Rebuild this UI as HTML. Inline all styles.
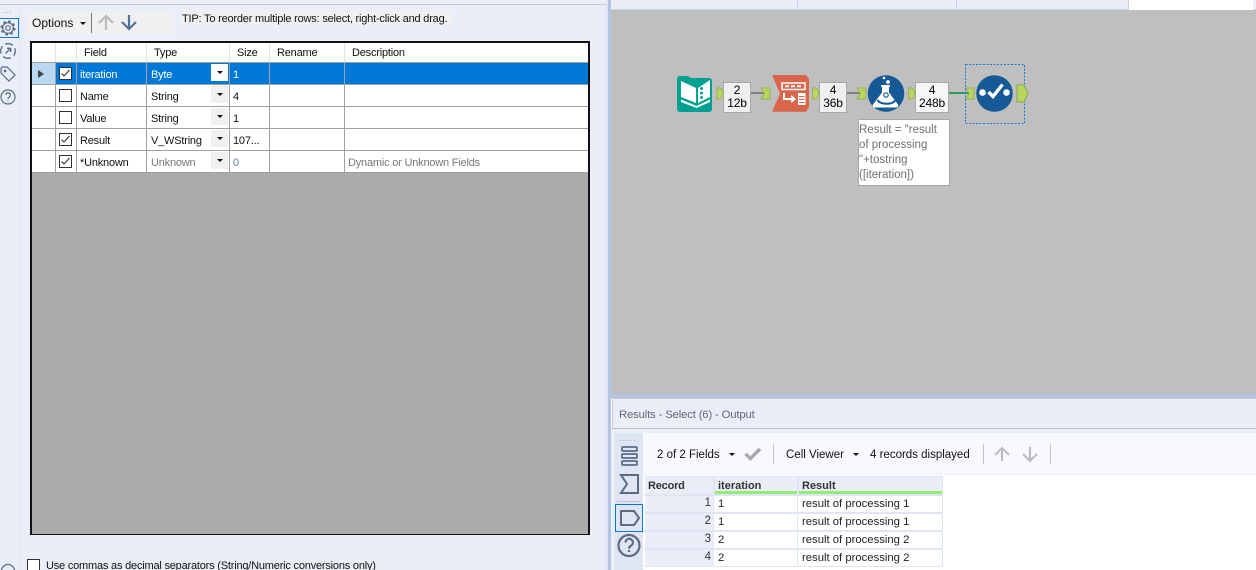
<!DOCTYPE html>
<html><head><meta charset="utf-8">
<style>
html,body{margin:0;padding:0;width:1256px;height:570px;overflow:hidden;background:#e9eef8}
body{position:relative;font-family:"Liberation Sans",sans-serif;font-size:11px;color:#111}
.a{position:absolute}
.t{position:absolute;white-space:nowrap;line-height:14px}
.g{letter-spacing:-.2px}
.cb{position:absolute;left:59px;width:11px;height:11px;border:1px solid #333;background:#fff}
.dd{position:absolute;left:211px;width:17px;height:17px;background:#f0f0f0}
.dd:after{content:"";position:absolute;left:6px;top:7px;border-left:3px solid transparent;border-right:3px solid transparent;border-top:3px solid #111}
.hl{position:absolute;left:32px;width:556px;height:1px;background:#a0a0a0}
.vl{position:absolute;top:63px;width:1px;height:109px;background:#a0a0a0}
.hv{position:absolute;top:43px;width:1px;height:19px;background:#e4e4e4}
.box{position:absolute;background:#f0f0f0;border:1px solid #a8a8a8;box-sizing:border-box;text-align:center;line-height:13px;font-size:12px;color:#000;padding-top:1px;letter-spacing:-.2px}
.rc{position:absolute;background:#e9eef8}
.num{text-align:right;line-height:15px;padding-right:2px;box-sizing:border-box;font-size:11.500px;color:#333}
.wc{position:absolute;background:#fff;font-size:11.300px;line-height:17px;padding-left:4px;box-sizing:border-box;white-space:nowrap;color:#222}
.sb{font-size:11.500px}
.th{font-weight:700;font-size:11px;color:#333;top:479px}
</style></head><body>

<!-- left panel -->
<div class="a" style="left:0;top:4px;width:606px;height:1px;background:#c8c8c8"></div>
<div class="a" style="left:606px;top:0;width:2px;height:570px;background:#dfe5f2"></div>
<div class="a" style="left:608px;top:0;width:3px;height:570px;background:#b3c3e3"></div>
<div class="a" style="left:19px;top:9px;width:1px;height:561px;background:#e2e8f3"></div>
<div class="t" style="left:2px;top:3px;color:#999;font-size:9px;letter-spacing:1px">...</div>

<!-- side icons -->
<div class="a" style="left:0;top:18px;width:19px;height:20px;border:1px solid #0078d7;border-left:none;box-sizing:border-box"></div>
<svg class="a" style="left:0;top:18px" width="20" height="90" viewBox="0 0 20 90" fill="none" stroke="#5b6b85" stroke-width="1.200">
<circle cx="8" cy="10" r="2.300"/>
<circle cx="8" cy="10" r="5.300"/>
<circle cx="8" cy="10" r="6.500" stroke-width="2" stroke-dasharray="2.600 2.500"/>
<circle cx="8" cy="33" r="7.300" stroke-dasharray="8 3.470" stroke-dashoffset="3" stroke-width="1.300"/>
<path d="M5.500 35.500l5-5M7 30.300h3.700V34" stroke-width="1.300"/>
<path d="M1 50.500V55l8 8 6-6-8-8H2z"/><circle cx="5" cy="53" r=".8"/>
<circle cx="8" cy="79" r="7"/><path d="M5.800 77a2.300 2.300 0 1 1 3.500 2c-1 .6-1.300 1-1.300 2"/><path d="M8 82.500v1"/>
</svg>
<svg class="a" style="left:0;top:563px" width="18" height="7" fill="none" stroke="#5b6b85" stroke-width="1.300"><circle cx="8" cy="8" r="6.500"/></svg>

<!-- toolbar -->
<div class="a" style="left:27px;top:12px;width:147px;height:23px;background:#f0f0f0"></div>
<div class="t" style="left:32px;top:16px;font-size:12px">Options</div>
<div class="a" style="left:80px;top:22px;border-left:3px solid transparent;border-right:3px solid transparent;border-top:3px solid #111"></div>
<div class="a" style="left:91px;top:13px;width:1px;height:20px;background:#777"></div>
<svg class="a" style="left:96px;top:13px" width="42" height="19" fill="none" stroke-width="2.200"><path d="M10 17V3M3 10l7-7 7 7" stroke="#bcbcbc"/><path d="M33 2v14M26 9l7 7 7-7" stroke="#54729a"/></svg>
<div class="a" style="left:180px;top:11px;width:272px;height:13px;background:#f0f0f0"></div>
<div class="t g" style="left:182px;top:12px">TIP: To reorder multiple rows: select, right-click and drag.</div>

<!-- grid -->
<div class="a" style="left:30px;top:41px;width:560px;height:494px;box-sizing:border-box;border:2px solid #111;border-width:2px 2px 1px 2px;background:#ababab"></div>
<div class="a" style="left:32px;top:43px;width:556px;height:129px;background:#fff"></div>
<div class="a" style="left:55px;top:63px;width:533px;height:21px;background:#0078d7"></div>
<div class="a" style="left:32px;top:63px;width:23px;height:21px;background:#b9d9f2"></div>
<div class="a" style="left:38px;top:70px;border-top:4.500px solid transparent;border-bottom:4.500px solid transparent;border-left:6px solid #444"></div>
<div class="hl" style="top:62px"></div><div class="hl" style="top:84px"></div><div class="hl" style="top:106px"></div><div class="hl" style="top:128px"></div><div class="hl" style="top:150px"></div><div class="hl" style="top:172px"></div>
<div class="vl" style="left:55px"></div><div class="vl" style="left:76px"></div><div class="vl" style="left:146px"></div><div class="vl" style="left:229px"></div><div class="vl" style="left:269px"></div><div class="vl" style="left:344px"></div>
<div class="hv" style="left:55px"></div><div class="hv" style="left:76px"></div><div class="hv" style="left:146px"></div><div class="hv" style="left:229px"></div><div class="hv" style="left:269px"></div><div class="hv" style="left:344px"></div>

<div class="t g" style="left:84px;top:46px">Field</div><div class="t g" style="left:154px;top:46px">Type</div><div class="t g" style="left:237px;top:46px">Size</div><div class="t g" style="left:277px;top:46px">Rename</div><div class="t g" style="left:352px;top:46px">Description</div>

<div class="cb" style="top:67px"></div><div class="cb" style="top:89px"></div><div class="cb" style="top:111px"></div><div class="cb" style="top:133px"></div><div class="cb" style="top:155px"></div>
<svg class="a" style="left:59px;top:67px" width="13" height="100" fill="none" stroke="#333" stroke-width="1.100"><path d="M2.500 6.500l2.500 2.500 5.500-6M2.500 72.500l2.500 2.500 5.500-6M2.500 94.500l2.500 2.500 5.500-6"/></svg>

<div class="t g" style="left:80px;top:68px;color:#fff">iteration</div><div class="t g" style="left:151px;top:68px;color:#fff">Byte</div><div class="t g" style="left:233px;top:68px;color:#fff">1</div>
<div class="t g" style="left:80px;top:90px">Name</div><div class="t g" style="left:151px;top:90px">String</div><div class="t g" style="left:233px;top:90px">4</div>
<div class="t g" style="left:80px;top:112px">Value</div><div class="t g" style="left:151px;top:112px">String</div><div class="t g" style="left:233px;top:112px">1</div>
<div class="t g" style="left:80px;top:134px">Result</div><div class="t g" style="left:151px;top:134px">V_WString</div><div class="t g" style="left:233px;top:134px">107...</div>
<div class="t g" style="left:80px;top:156px">*Unknown</div><div class="t g" style="left:151px;top:156px;color:#777">Unknown</div><div class="t g" style="left:233px;top:156px;color:#5a7fb0">0</div><div class="t g" style="left:348px;top:156px;color:#777">Dynamic or Unknown Fields</div>
<div class="dd" style="top:64px;background:#fff"></div><div class="dd" style="top:86px"></div><div class="dd" style="top:108px"></div><div class="dd" style="top:130px"></div><div class="dd" style="top:152px"></div>

<!-- bottom checkbox -->
<div class="a" style="left:27px;top:559px;width:11px;height:11px;border:1px solid #333;background:#fff"></div>
<div class="t g" style="left:46px;top:559px">Use commas as decimal separators (String/Numeric conversions only)</div>

<!-- right top tabs -->
<div class="a" style="left:611px;top:0;width:645px;height:10px;background:#e9eef8"></div>
<div class="a" style="left:611px;top:9px;width:645px;height:1px;background:#c6d2e8"></div>
<div class="a" style="left:797px;top:0;width:1px;height:10px;background:#c6d2e8"></div>
<div class="a" style="left:956px;top:0;width:1px;height:10px;background:#c6d2e8"></div>
<div class="a" style="left:1128px;top:0;width:1px;height:10px;background:#c6d2e8"></div>
<div class="a" style="left:1129px;top:0;width:124px;height:10px;background:#fff"></div>

<!-- canvas -->
<div class="a" style="left:611px;top:10px;width:645px;height:384px;background:#bfbfbf"></div>
<div class="a" style="left:611px;top:394px;width:645px;height:4px;background:#b3c3e3"></div>

<svg class="a" style="left:660px;top:50px" width="380" height="90" viewBox="0 0 380 90">
<!-- connectors -->
<rect x="70" y="42" width="34" height="2" fill="#808080"/><rect x="170" y="42" width="30" height="2" fill="#808080"/>
<rect x="270" y="42" width="40" height="2" fill="#2f9d55"/>
<!-- book tool -->
<path d="M17 29a3 3 0 0 1 3-3h8l3 2h18a3 3 0 0 1 3 3v28a3 3 0 0 1-3 3H20a3 3 0 0 1-3-3z" fill="#00a193"/>
<path d="M21 31l15 7v15l-15-6zM38 38l12-8v17l-12 6z" fill="#fff"/>
<path d="M21 49.500l15.500 6.500L50 49.500v2.500l-13.500 6L21 52z" fill="#fff"/>
<circle cx="41.500" cy="38.500" r="1.500" fill="#00a193"/><circle cx="41.500" cy="43" r="1.500" fill="#00a193"/><circle cx="41.500" cy="47.500" r="1.500" fill="#00a193"/>
<!-- anchors -->
<path d="M57 38h3l3 2.500v6l-3 2.500h-3z" fill="#b8d65e" stroke="#8ca64a" stroke-width=".7"/>
<path d="M101 38h9v11h-9l3-5.500z" fill="#b8d65e" stroke="#8ca64a" stroke-width=".7"/>
<!-- red tool -->
<path d="M112 25h34l3 4v28l-3 4.700h-34l8-18.200z" fill="#d9664a"/>
<rect x="122" y="33" width="23" height="6.500" fill="none" stroke="#fff" stroke-width="1.500"/><path d="M125 36.300h4M131 36.300h4M137 36.300h4" stroke="#fff" stroke-width="2"/>
<path d="M124 43v6h9M131 46l3.500 3-3.500 3" fill="none" stroke="#fff" stroke-width="2"/>
<rect x="138" y="43" width="7.500" height="12" fill="#fff"/><path d="M139 46.500h5.500M139 49.500h5.500M139 52.500h5.500" stroke="#d9664a"/>
<path d="M152.700 38h3l3 2.500v6l-3 2.500h-3z" fill="#b8d65e" stroke="#8ca64a" stroke-width=".7"/>
<path d="M197 38h9v11h-9l3-5.500z" fill="#b8d65e" stroke="#8ca64a" stroke-width=".7"/>
<!-- formula -->
<circle cx="226" cy="43.500" r="18.300" fill="#155a96"/>
<path d="M221 35h9v1.500l-1 .5v5.500l9 12a2 2 0 0 1-2 3h-21a2 2 0 0 1-2-3l9-12V37l-1-.5z" fill="#fff"/>
<path d="M217.500 50c3 5 15 5 18 0" fill="none" stroke="#155a96" stroke-width="2"/>
<circle cx="226" cy="45" r="2.200" fill="none" stroke="#155a96" stroke-width="1.200"/>
<circle cx="228" cy="32" r="1.900" fill="#fff"/><circle cx="224" cy="28" r="1.300" fill="#fff"/>
<path d="M248.700 38h3l3 2.500v6l-3 2.500h-3z" fill="#b8d65e" stroke="#8ca64a" stroke-width=".7"/>
<path d="M306 38h8v11h-8l3-5.500z" fill="#b8d65e" stroke="#8ca64a" stroke-width=".7"/>
<!-- select -->
<rect x="305.500" y="14.500" width="59" height="59" fill="none" stroke="#1a78d0" stroke-dasharray="2 1.500"/>
<circle cx="334.500" cy="43.500" r="18.300" fill="#155a96"/>
<circle cx="322.500" cy="42.500" r="3.300" fill="#fff"/><circle cx="346.500" cy="42.500" r="3.300" fill="#fff"/>
<path d="M328.500 42l4.500 4.500 9.500-12" fill="none" stroke="#fff" stroke-width="3.400"/>
<path d="M357 35h7l4 8.500-4 8.500h-7z" fill="#b8d65e" stroke="#7d9a45" stroke-width=".8"/>
</svg>
<div class="box" style="left:723px;top:82px;width:28px;height:31px">2<br>12b</div>
<div class="box" style="left:819px;top:82px;width:28px;height:31px">4<br>36b</div>
<div class="box" style="left:915px;top:82px;width:34px;height:31px;background:#f6f6f6">4<br>248b</div>
<div class="a" style="left:858px;top:119px;width:92px;height:67px;box-sizing:border-box;background:#fff;border:1px solid #a8a8a8;font-size:11.500px;line-height:15px;color:#6f6f6f;padding:3px 0 0 0;white-space:nowrap">Result = "result<br>of processing<br>"+tostring<br>([iteration])</div>

<!-- results panel -->
<div class="a" style="left:611px;top:398px;width:645px;height:172px;background:#fff"></div>
<div class="a" style="left:612px;top:398px;width:644px;height:31px;background:#e9eef8;border-top:1px solid #c9c9c9;border-bottom:1px solid #c0c0c0;border-left:1px solid #c9c9c9;box-sizing:border-box"></div>
<div class="t" style="left:619px;top:408px;font-size:11.300px;letter-spacing:-.15px;color:#667">Results - Select (6) - Output</div>
<div class="a" style="left:611px;top:429px;width:645px;height:4px;background:#e9eef8"></div>
<div class="a" style="left:615px;top:433px;width:28px;height:137px;background:#dfe5f2"></div>
<div class="a" style="left:643px;top:433px;width:613px;height:41px;background:#f7f9ff"></div>
<div class="a" style="left:611px;top:433px;width:4px;height:137px;background:#e9eef8"></div>
<div class="a" style="left:643px;top:474px;width:613px;height:1px;background:#eef1f7"></div>
<div class="t" style="left:619px;top:431px;color:#aaa;font-size:9px;letter-spacing:.3px">......</div>
<svg class="a" style="left:615px;top:445px" width="28" height="115" fill="none" stroke="#5b6b85">
<g stroke-width="1.800"><rect x="7" y="2" width="15" height="4" rx="1"/><rect x="7" y="9" width="15" height="4" rx="1"/><rect x="7" y="16" width="15" height="4" rx="1"/></g>
<path d="M6 30h17v18H6l6-9z" stroke-width="2"/>
<path d="M6 66h13l5 7-5 7H6z" stroke-width="2" stroke-linejoin="round"/>
<circle cx="14" cy="100.500" r="10.500" stroke-width="2.200"/><path d="M10.500 97.500a3.700 3.700 0 1 1 5.500 3.200c-1.400.8-2 1.500-2 3" stroke-width="2.200"/><path d="M14 105v2" stroke-width="2.200"/>
</svg>
<div class="a" style="left:617px;top:501px;width:24px;height:1px;background:#c4c4c4"></div>
<div class="a" style="left:615px;top:504px;width:28px;height:28px;box-sizing:border-box;border:1px solid #0078d7"></div>

<div class="t sb" style="left:657px;top:448px">2 of 2 Fields</div>
<div class="a" style="left:729px;top:453px;border-left:3px solid transparent;border-right:3px solid transparent;border-top:3px solid #111"></div>
<svg class="a" style="left:744px;top:447px" width="18" height="14" fill="none" stroke="#aaa" stroke-width="3.500"><path d="M1.500 7l5 4.500L16 2"/></svg>
<div class="a" style="left:773px;top:444px;width:1px;height:20px;background:#c4c4c4"></div>
<div class="t sb" style="left:786px;top:448px">Cell Viewer</div>
<div class="a" style="left:853px;top:453px;border-left:3px solid transparent;border-right:3px solid transparent;border-top:3px solid #111"></div>
<div class="t sb" style="left:870px;top:448px">4 records displayed</div>
<div class="a" style="left:983px;top:444px;width:1px;height:20px;background:#c4c4c4"></div>
<div class="a" style="left:1050px;top:444px;width:1px;height:20px;background:#c4c4c4"></div>
<svg class="a" style="left:994px;top:446px" width="46" height="16" fill="none" stroke="#bbb" stroke-width="2"><path d="M8 15V2M1 9l7-7 7 7M36 1v13M29 8l7 7 7-7"/></svg>

<!-- results table -->
<div class="rc" style="left:645px;top:477px;width:68px;height:17px"></div>
<div class="rc" style="left:715px;top:477px;width:82px;height:14px"></div>
<div class="rc" style="left:799px;top:477px;width:143px;height:14px"></div>
<div class="a" style="left:715px;top:491px;width:82px;height:3px;background:#90ee70"></div>
<div class="a" style="left:799px;top:491px;width:143px;height:3px;background:#90ee70"></div>
<div class="t th" style="left:648px;letter-spacing:-.2px">Record</div>
<div class="t th" style="left:718px">iteration</div>
<div class="t th" style="left:802px">Result</div>
<div class="a" style="left:644px;top:476px;width:299px;height:1px;background:#dfe5f2"></div>
<div class="a" style="left:644px;top:494px;width:299px;height:2px;background:#dfe5f2"></div>
<div class="a" style="left:644px;top:512px;width:299px;height:2px;background:#dfe5f2"></div>
<div class="a" style="left:644px;top:530px;width:299px;height:2px;background:#dfe5f2"></div>
<div class="a" style="left:644px;top:548px;width:299px;height:2px;background:#dfe5f2"></div>
<div class="a" style="left:644px;top:566px;width:299px;height:1px;background:#dfe5f2"></div>
<div class="a" style="left:713px;top:476px;width:2px;height:91px;background:#dfe5f2"></div>
<div class="a" style="left:797px;top:476px;width:2px;height:91px;background:#dfe5f2"></div>
<div class="a" style="left:942px;top:476px;width:1px;height:91px;background:#dfe5f2"></div>
<div class="rc num" style="left:645px;top:496px;width:68px;height:16px">1</div>
<div class="rc num" style="left:645px;top:514px;width:68px;height:16px">2</div>
<div class="rc num" style="left:645px;top:532px;width:68px;height:16px">3</div>
<div class="rc num" style="left:645px;top:550px;width:68px;height:16px">4</div>
<div class="wc" style="left:714px;top:496px;width:83px;height:16px">1</div>
<div class="wc" style="left:714px;top:514px;width:83px;height:16px">1</div>
<div class="wc" style="left:714px;top:532px;width:83px;height:16px">2</div>
<div class="wc" style="left:714px;top:550px;width:83px;height:16px">2</div>
<div class="wc" style="left:798px;top:496px;width:144px;height:16px">result of processing 1</div>
<div class="wc" style="left:798px;top:514px;width:144px;height:16px">result of processing 1</div>
<div class="wc" style="left:798px;top:532px;width:144px;height:16px">result of processing 2</div>
<div class="wc" style="left:798px;top:550px;width:144px;height:16px">result of processing 2</div>
</body></html>
